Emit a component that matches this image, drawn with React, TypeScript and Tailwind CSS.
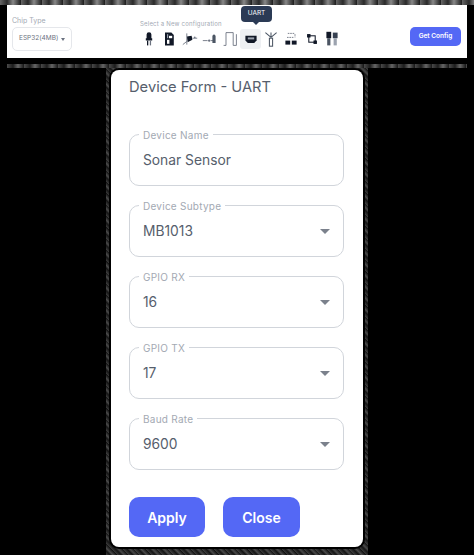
import React from "react";

// small config icons, in order, drawn on a 20x20 box
const configIcons: { name: string; art: React.ReactNode }[] = [
  {
    name: "LED",
    art: (
      <g fill="#111827">
        <path d="M7 9V4.5a3 3 0 0 1 6 0V9h1v3H6V9z" />
        <rect x="7.5" y="12" width="1.6" height="6" />
        <rect x="11" y="12" width="1.6" height="6" fill="#6b7280" />
      </g>
    ),
  },
  {
    name: "Relay",
    art: (
      <g>
        <path d="M5 2h8l3 3v13H5z" fill="#111827" />
        <rect x="10" y="6" width="4" height="3" fill="#fff" />
        <rect x="7.5" y="11" width="3" height="5" fill="#fff" />
        <rect x="7.5" y="4" width="1.5" height="5" fill="#9ca3af" />
      </g>
    ),
  },
  {
    name: "Sensor",
    art: (
      <g>
        <path d="M6 7l6-1 1 5-6 3z" fill="#111827" />
        <path d="M13 9h6M1 17l5-4M6 3v14" stroke="#6b7280" strokeWidth="1.1" fill="none" />
        <circle cx="16" cy="8" r="1" fill="#6b7280" />
      </g>
    ),
  },
  {
    name: "Switch",
    art: (
      <g fill="none" stroke="#6b7280" strokeWidth="1.1">
        <path d="M1 12h6M11 12h3" />
        <path d="M13 15V6l2-2 2 2v9z" fill="#4b5563" stroke="none" />
        <circle cx="9" cy="12" r="1.5" fill="#6b7280" stroke="none" />
      </g>
    ),
  },
  {
    name: "Pulse",
    art: <path d="M2 18h3V2h9v16h4V4" fill="none" stroke="#6b7280" strokeWidth="1.1" />,
  },
  {
    name: "UART",
    art: (
      <g>
        <path d="M3 6h14v6l-3 3H6l-3-3z" fill="#111827" />
        <rect x="6" y="8" width="8" height="2.5" fill="#9ca3af" />
      </g>
    ),
  },
  {
    name: "Antenna",
    art: (
      <g fill="none" stroke="#4b5563" strokeWidth="1.3">
        <path d="M3 2l7 6 7-6M10 2v6" />
        <rect x="8" y="9" width="4" height="10" fill="#fff" />
      </g>
    ),
  },
  {
    name: "Module",
    art: (
      <g>
        <path d="M6 3h8M15 4v4M5 8h8" stroke="#6b7280" strokeWidth="1.1" strokeDasharray="2 1" fill="none" />
        <rect x="3" y="12" width="6" height="5" fill="#111827" />
        <rect x="11" y="12" width="6" height="5" fill="#111827" />
      </g>
    ),
  },
  {
    name: "I2C",
    art: (
      <g fill="none" stroke="#111827" strokeWidth="1.3">
        <rect x="6" y="6" width="8" height="8" />
        <rect x="4.5" y="4.5" width="3" height="3" fill="#111827" />
        <rect x="12.5" y="12.5" width="3" height="3" fill="#111827" />
      </g>
    ),
  },
  {
    name: "Pins",
    art: (
      <g>
        <rect x="3" y="1" width="6" height="8" fill="#111827" />
        <rect x="4" y="9" width="4" height="9" fill="#4b5563" />
        <rect x="11" y="2" width="6" height="7" fill="#374151" />
        <rect x="12" y="9" width="4" height="9" fill="#9ca3af" />
      </g>
    ),
  },
];

const fields = [
  { label: "Device Name", value: "Sonar Sensor", select: false },
  { label: "Device Subtype", value: "MB1013", select: true },
  { label: "GPIO RX", value: "16", select: true },
  { label: "GPIO TX", value: "17", select: true },
  { label: "Baud Rate", value: "9600", select: true },
];

const Field = ({ label, value, select }: { label: string; value: string; select: boolean }) => (
  <div className="relative flex h-[52px] items-center justify-between rounded-[10px] border border-[#d1d5db] px-[13px]">
    <span className="absolute -top-[7px] left-[9px] bg-white px-[4px] text-[10px] leading-[14px] tracking-[0.25px] text-[#a3a9b3]">
      {label}
    </span>
    <span className="text-[13.8px] text-[#565e6c]">{value}</span>
    {select && <span className="h-0 w-0 border-x-[5px] border-t-[5px] border-x-transparent border-t-[#7b818c]" />}
  </div>
);

const App = () => {
  return (
    <div className="relative h-[555px] w-[474px] overflow-hidden bg-black font-['Inter',sans-serif]">
      <div className="h-[5px] bg-[repeating-linear-gradient(90deg,#666_0px,#2a2a2a_7px,#888_13px,#1c1c1c_21px)]" />

      {/* top config bar */}
      <div className="mx-[7px] flex h-[53px] items-start bg-white">
        <div className="ml-[5px] w-[125px] pt-[11px]">
          <div className="text-[7px] leading-[10px] text-[#a3a9b3]">Chip Type</div>
          <div className="mt-[1px] flex h-[24px] w-[60px] items-center justify-between rounded-[5px] border border-[#e5e7eb] px-[6px] text-[6.5px] text-[#6b7280]">
            <span>ESP32(4MB)</span>
            <span className="h-0 w-0 border-x-[2.5px] border-t-[3px] border-x-transparent border-t-[#6b7280]" />
          </div>
        </div>
        <div className="ml-[3px] pt-[15px]">
          <div className="text-[6px] leading-[8px] tracking-[0.2px] text-[#a3a9b3]">Select a New configuration</div>
          <div className="-ml-[1px] mt-[1px] flex h-[20px] items-center">
            {configIcons.map((icon) => (
              <div
                key={icon.name}
                className={`flex h-[20px] w-[20.3px] items-center justify-center rounded-[3px] ${
                  icon.name === "UART" ? "bg-[#eef0f3]" : ""
                }`}
              >
                <svg viewBox="0 0 20 20" className="h-[16px] w-[16px]">
                  {icon.art}
                </svg>
              </div>
            ))}
          </div>
        </div>
        <button className="ml-auto mr-[6px] mt-[22px] h-[19px] w-[51px] rounded-[5px] bg-[#5468f5] text-[6.5px] font-semibold text-white">
          Get Config
        </button>
      </div>

      {/* UART tooltip */}
      <div className="absolute left-[241px] top-[6px] flex h-[16px] w-[31px] items-center justify-center rounded-[4px] bg-[#2b3a55] text-[6.5px] text-white">
        UART
        <span className="absolute -bottom-[3px] left-[12px] h-0 w-0 border-x-[3px] border-t-[3px] border-x-transparent border-t-[#2b3a55]" />
      </div>

      {/* speckled edge left over from the capture */}
      <div className="mx-[7px] mt-[6px] h-[4px] bg-[repeating-linear-gradient(90deg,#4a4a4a_0px,#1c1c1c_6px,#666_11px,#161616_17px)]" />

      <div className="mx-auto w-[262px] bg-[repeating-linear-gradient(45deg,#3d3d3d_0px,#141414_3px,#4a4a4a_5px,#111_8px)] px-[5px] pb-[8px] pt-[2px]">
        {/* device form */}
        <div className="h-[477px] w-[252px] rounded-[8px] bg-white px-[18px] shadow-[0_0_0_2px_#000]">
          <h2 className="pt-[7px] text-[14.7px] leading-[20px] text-[#565e6c]">Device Form - UART</h2>
          <div className="mt-[37px] flex w-[215px] flex-col gap-[19px]">
            {fields.map((f) => (
              <Field key={f.label} {...f} />
            ))}
          </div>
          <div className="mt-[27px] flex gap-[18px]">
            <button className="h-[40px] w-[76px] rounded-[10px] bg-[#5468f5] text-[14px] font-semibold text-white">Apply</button>
            <button className="h-[40px] w-[77px] rounded-[10px] bg-[#5468f5] text-[14px] font-semibold text-white">Close</button>
          </div>
        </div>
      </div>
    </div>
  );
};

export default App;
